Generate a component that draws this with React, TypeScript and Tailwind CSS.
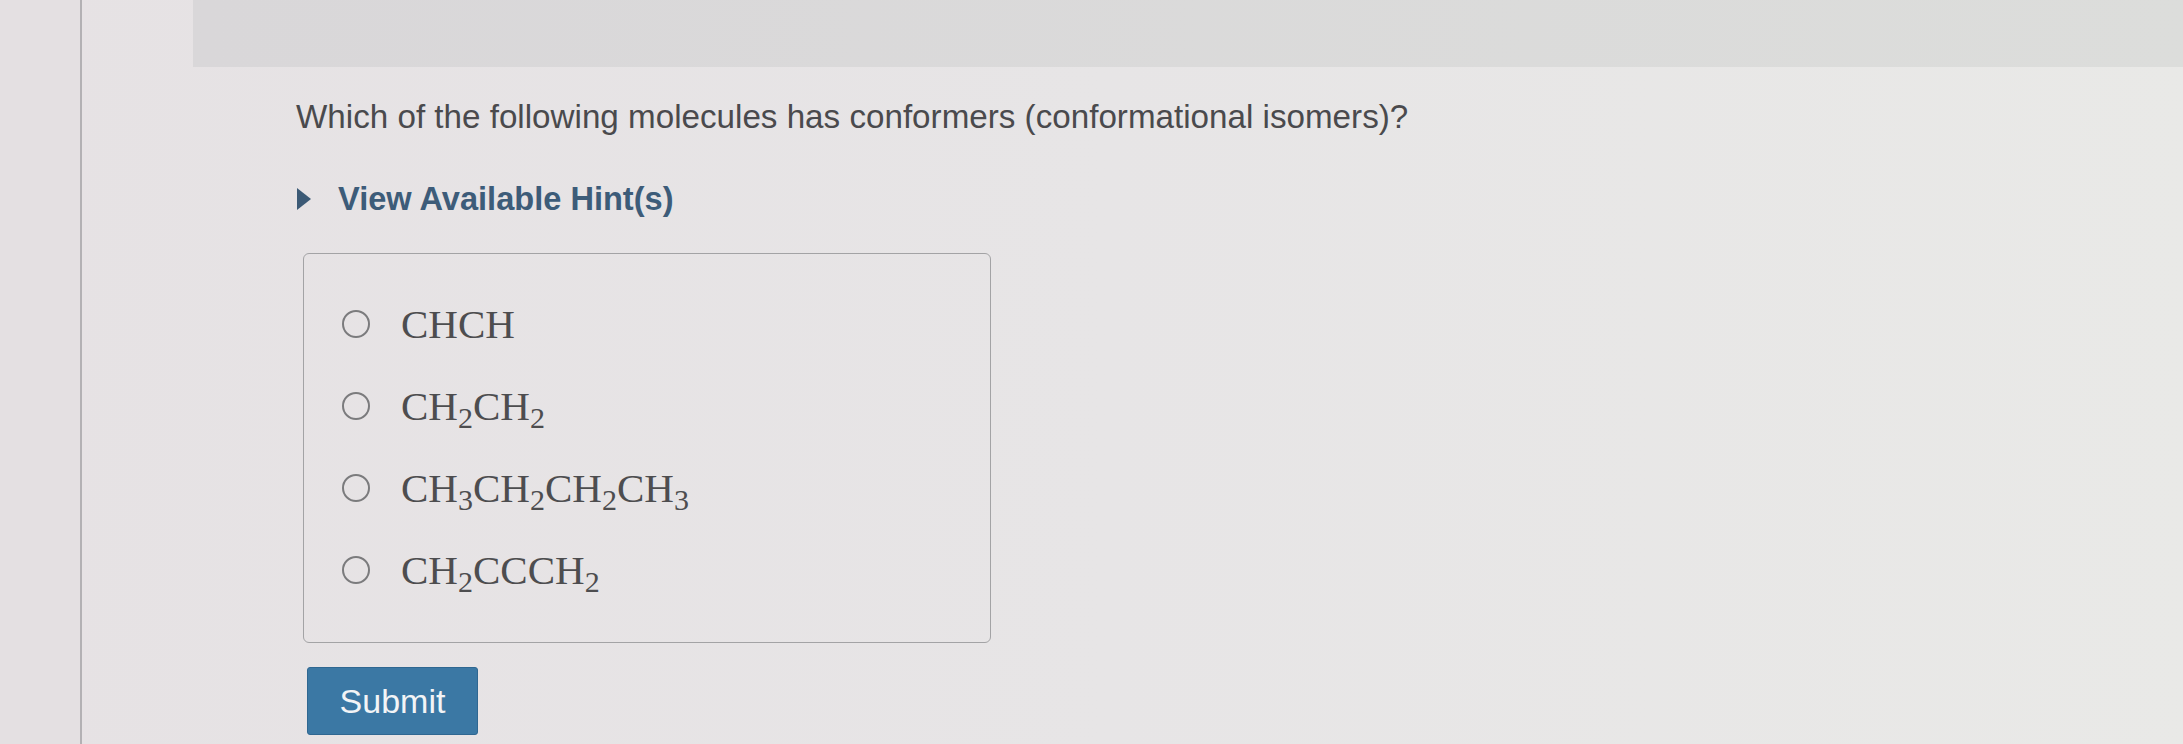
import React from "react";

const sans = { fontFamily: '"Liberation Sans", Arial, sans-serif' };
const serif = { fontFamily: '"Liberation Serif", "Times New Roman", serif' };

function Formula({ parts }: { parts: (string | [string])[] }) {
  return (
    <span style={serif} className="text-[41px] leading-[40px] text-[#4d4d4f]">
      {parts.map((p, i) =>
        typeof p === "string" ? (
          <span key={i}>{p}</span>
        ) : (
          <sub key={i} className="text-[30px]">
            {p[0]}
          </sub>
        )
      )}
    </span>
  );
}

const options: (string | [string])[][] = [
  ["CHCH"],
  ["CH", ["2"], "CH", ["2"]],
  ["CH", ["3"], "CH", ["2"], "CH", ["2"], "CH", ["3"]],
  ["CH", ["2"], "CCCH", ["2"]],
];

export default function App() {
  return (
    <div
      className="flex h-[744px] w-full overflow-hidden bg-linear-to-r from-[#e6e2e4] via-[#e7e5e6] to-[#e9e9e7]"
      style={sans}
    >
      <div className="w-[82px] shrink-0 border-r-2 border-[#b3b1b4] bg-[#e4e0e2]" />
      <div className="flex min-w-0 flex-1 flex-col">
        <div className="ml-[111px] h-[67px] shrink-0 bg-linear-to-r from-[#d9d7d9] to-[#dcdddb]" />
        <div className="flex flex-col pl-[214px]">
          <p className="mt-[30px] text-[33.2px] leading-[40px] text-[#4a4a4d]">
            Which of the following molecules has conformers (conformational isomers)?
          </p>
          <div className="mt-[42px] flex h-[40px] items-center">
            <svg width="16" height="24" viewBox="0 0 16 24" className="shrink-0">
              <polygon points="1,1 15,12 1,23" fill="#3c5a76" />
            </svg>
            <span className="ml-[26px] text-[32.6px] font-bold leading-[40px] text-[#3d5c79]">
              View Available Hint(s)
            </span>
          </div>
          <div className="ml-[7px] mt-[34px] flex h-[390px] w-[688px] flex-col rounded-[6px] border-[1.5px] border-[#a3a3a5] pl-[38px] pt-[29px]">
            {options.map((parts, i) => (
              <label key={i} className="flex h-[82px] items-center">
                <span className="h-[28px] w-[28px] shrink-0 rounded-full border-[2.5px] border-[#7b7b7d]" />
                <span className="ml-[31px] flex items-center">
                  <Formula parts={parts} />
                </span>
              </label>
            ))}
          </div>
          <div className="ml-[11px] mt-[24px]">
            <button className="flex h-[68px] w-[171px] items-center justify-center rounded-[3px] border border-[#2f6791] bg-[#3b78a4] text-[34px] text-[#f2f4f6]">
              Submit
            </button>
          </div>
        </div>
      </div>
    </div>
  );
}
